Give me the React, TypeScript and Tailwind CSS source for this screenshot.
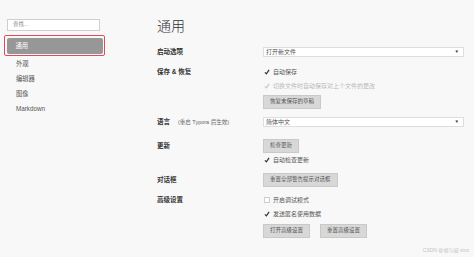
import React from 'react';

const font = { fontFamily: '"Liberation Sans", "Noto Sans CJK SC", sans-serif' };

const CheckRow: React.FC<{ label: string; checked?: boolean; disabled?: boolean }> = ({ label, checked, disabled }) => (
    <div className={`ml-[1px] flex h-[14px] items-center gap-[3px] ${disabled ? 'text-[#b8b8b8]' : 'text-[#555]'}`}>
        <span className={`flex h-[6px] w-[6px] items-center justify-center ${checked ? '' : 'border border-[#cdcdcd] bg-white'}`}>
            {checked && (
                <svg viewBox="0 0 10 10" className="h-[6px] w-[6px]">
                    <path d="M1.5 5.5 L4 8 L8.5 1.5" fill="none" stroke={disabled ? '#c8c8c8' : '#333'} strokeWidth="2" />
                </svg>
            )}
        </span>
        <span className="text-[6px] leading-none">{label}</span>
    </div>
);

const Btn: React.FC<{ children: React.ReactNode; className?: string }> = ({ children, className }) => (
    <button className={`h-[14px] border border-[#c9c9c9] bg-[#d8d8d8] px-[6px] text-[5.5px] leading-none text-[#555] ${className ?? ''}`}>
        {children}
    </button>
);

const Select: React.FC<{ value: string }> = ({ value }) => (
    <div className="flex h-[10px] w-[201px] items-center justify-between border border-[#dedede] bg-white pl-[2px] pr-[4px]">
        <span className="text-[6px] leading-none text-[#555]">{value}</span>
        <span className="text-[4.5px] leading-none text-[#333]">▼</span>
    </div>
);

const Label: React.FC<{ children: React.ReactNode; h: string }> = ({ children, h }) => (
    <div className={`flex ${h} items-center text-[6.5px] font-bold leading-none text-[#333]`}>{children}</div>
);

const App: React.FC = () => {
    return (
        <div className="relative flex h-[257px] w-[474px] overflow-hidden bg-[#f8f8f8]" style={font}>
            {/* sidebar */}
            <div className="w-[108px] pl-[4px] pt-[19px]">
                <div className="ml-[3px] flex h-[12px] w-[93px] items-center border border-[#cfcfcf] bg-white pl-[5px]">
                    <span className="text-[5.5px] leading-none text-[#888]">查找...</span>
                </div>
                <div className="mt-[4px] w-[101px] rounded-[2px] border-[1.5px] border-[#e24a5c] p-[1.5px]">
                    <div className="flex h-[16px] items-center rounded-[2px] bg-[#979797] pl-[9px] text-[6.3px] text-white">通用</div>
                </div>
                <div className="ml-[12px] flex flex-col text-[6.3px] text-[#555]">
                    <div className="flex h-[15px] items-center">外观</div>
                    <div className="flex h-[15px] items-center">编辑器</div>
                    <div className="flex h-[15px] items-center">图像</div>
                    <div className="flex h-[15px] items-center">Markdown</div>
                </div>
            </div>

            {/* main */}
            <div className="pl-[49px] pt-[16px]">
                <div className="h-[20px] text-[14px] font-light leading-[20px] text-[#333]">通用</div>

                <div className="mt-[11px] grid grid-cols-[106px_201px]">
                    <Label h="h-[10px]">启动选项</Label>
                    <Select value="打开新文件" />
                </div>

                <div className="mt-[8px] grid grid-cols-[106px_201px]">
                    <Label h="h-[14px]">保存 &amp; 恢复</Label>
                    <div className="flex flex-col items-start">
                        <CheckRow label="自动保存" checked />
                        <CheckRow label="切换文件时自动保存对上个文件的更改" checked disabled />
                        <Btn className="mt-[2px]">恢复未保存的草稿</Btn>
                    </div>
                </div>

                <div className="mt-[8px] grid grid-cols-[106px_201px]">
                    <Label h="h-[11px]">
                        语言<span className="ml-[8px] text-[5.5px] font-normal text-[#666]">(重启 Typora 后生效)</span>
                    </Label>
                    <Select value="简体中文" />
                </div>

                <div className="mt-[11px] grid grid-cols-[106px_201px]">
                    <Label h="h-[14px]">更新</Label>
                    <div className="flex flex-col items-start">
                        <Btn>检查更新</Btn>
                        <CheckRow label="自动检查更新" checked />
                    </div>
                </div>

                <div className="mt-[6px] grid grid-cols-[106px_201px]">
                    <Label h="h-[14px]">对话框</Label>
                    <div className="flex flex-col items-start">
                        <Btn>重置全部警告提示对话框</Btn>
                    </div>
                </div>

                <div className="mt-[6px] grid grid-cols-[106px_201px]">
                    <Label h="h-[14px]">高级设置</Label>
                    <div className="flex flex-col items-start">
                        <CheckRow label="开启调试模式" />
                        <CheckRow label="发送匿名使用数据" checked />
                        <div className="mt-[3px] flex gap-[10px]">
                            <Btn>打开高级设置</Btn>
                            <Btn>重置高级设置</Btn>
                        </div>
                    </div>
                </div>
            </div>

            <div className="absolute bottom-[4px] right-[5px] text-[5px] leading-none text-[#c4c4c4]">CSDN @想与城 xino</div>
        </div>
    );
};

export default App;
